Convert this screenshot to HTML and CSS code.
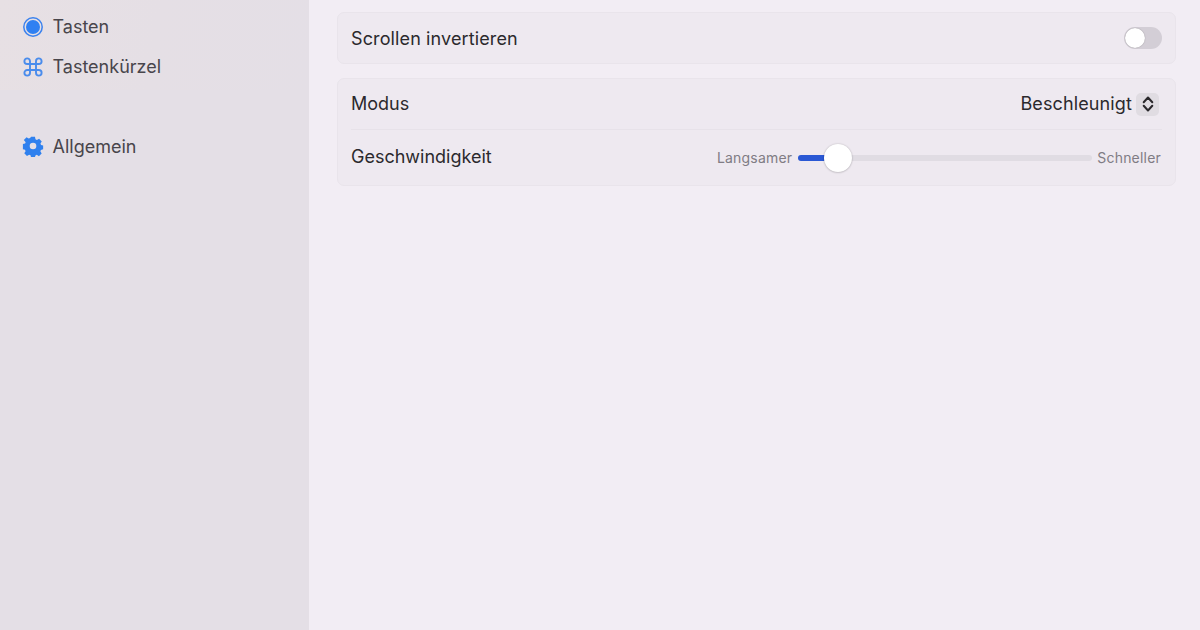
FILE: index.html
```html
<!DOCTYPE html>
<html lang="de">
<head>
<meta charset="utf-8">
<title>Einstellungen</title>
<link rel="stylesheet" href="styles.css">
</head>
<body>
<div class="app">
  <aside class="sidebar">
    <div class="nav-item">
      <svg class="icon" viewBox="0 0 22 22"><circle cx="11" cy="11" r="9.200" fill="none" stroke="#3b82ee" stroke-width="1.500"/><circle cx="11" cy="11" r="7" fill="#2f80f2"/></svg>
      <span class="label">Tasten</span>
    </div>
    <div class="nav-item">
      <svg class="icon" viewBox="0 0 22 22"><path d="M8 8h6v6H8z M8 8V5.200a2.800 2.800 0 1 0-2.800 2.800H8 M14 8h2.800A2.800 2.800 0 1 0 14 5.200V8 M8 14H5.200A2.800 2.800 0 1 0 8 16.800V14 M14 14v2.800a2.800 2.800 0 1 0 2.800-2.800H14" fill="none" stroke="#4a8cec" stroke-width="1.900"/></svg>
      <span class="label">Tastenkürzel</span>
    </div>
    <div class="nav-item nav-gap">
      <svg class="icon" viewBox="0 0 22 22"><path fill="#2f80ee" fill-rule="evenodd" transform="translate(.9 .9) scale(.92)" d="M8.900 1h4.200l.6 2.700 1.500.7 2.400-1.400 2.900 3-1.400 2.300.6 1.500 2.300.6v4.200l-2.400.6-.6 1.500 1.400 2.400-3 2.900-2.300-1.400-1.500.6-.6 2.300H8.900l-.6-2.400-1.500-.6-2.400 1.400-2.900-3 1.400-2.300-.6-1.500-2.300-.6V8.900l2.400-.6.6-1.500L1 4.400l3-2.900 2.300 1.400 1.500-.6zM11 7.400a3.600 3.600 0 1 0 0 7.200 3.600 3.600 0 0 0 0-7.200z"/></svg>
      <span>Allgemein</span>
    </div>
  </aside>
  <main class="content">
    <section class="panel">
      <div class="row row-toggle">
        <span class="wide">Scrollen invertieren</span>
        <div class="toggle"><div class="toggle-knob"></div></div>
      </div>
    </section>
    <section class="panel">
      <div class="row row-mode">
        <span class="label">Modus</span>
        <div class="select">
          <span class="label wide">Beschleunigt</span>
          <div class="stepper">
            <svg viewBox="0 0 12 18" class="stepper-icon"><path d="M1.700 7.200 6 2.500l4.300 4.700M1.700 10.800 6 15.500l4.300-4.700" fill="none" stroke="#2a282c" stroke-width="2" stroke-linecap="round" stroke-linejoin="round"/></svg>
          </div>
        </div>
      </div>
      <div class="row row-speed">
        <span class="label">Geschwindigkeit</span>
        <div class="slider-wrap">
          <span class="hint">Langsamer</span>
          <div class="slider">
            <div class="slider-fill"></div>
            <div class="slider-knob"></div>
          </div>
          <span class="hint">Schneller</span>
        </div>
      </div>
    </section>
  </main>
</div>
</body>
</html>
```
FILE: styles.css
```css
* { box-sizing: border-box; }
html, body { margin: 0; height: 100%; }
body {
  width: 1200px;
  height: 630px;
  overflow: hidden;
  font-family: Inter, "Liberation Sans", sans-serif;
  color: #2b292d;
  background: #f2edf4;
}
.app { display: flex; height: 630px; }
.sidebar {
  width: 309px;
  flex: none;
  padding-top: 7px;
  background: linear-gradient(100deg, #e7e0e4 0, #e5dfe5 50%, #e4dfe6 100%) 0 0 / 100% 90px no-repeat, #e4dfe6;
  color: #48454b;
}
.nav-item {
  display: flex;
  align-items: center;
  height: 40px;
  padding-left: 22px;
  gap: 8.500px;
  font-size: 18px;
}
.nav-gap { margin-top: 39px; }
.label { margin-bottom: 2px; }
.wide { letter-spacing: .12px; }
.icon { width: 22px; height: 22px; flex: none; }
.content {
  flex: 1;
  padding: 12px 24px 0 28px;
  display: flex;
  flex-direction: column;
  gap: 14px;
}
.panel {
  background: #eee9f0;
  border: 1px solid #e9e4eb;
  border-radius: 7px;
  padding: 0 13px;
  font-size: 18px;
}
.row { display: flex; align-items: center; justify-content: space-between; }
.row-toggle { height: 50px; }
.row-mode { height: 51px; border-bottom: 1px solid #e7e2e9; }
.row-speed { height: 55px; }
.toggle {
  width: 38px;
  height: 22px;
  border-radius: 11px;
  background: #d3ced6;
  padding: 1px;
}
.toggle-knob {
  width: 20px;
  height: 20px;
  border-radius: 50%;
  background: #fff;
  box-shadow: 0 0 1px rgba(0,0,0,.4);
}
.select { display: flex; align-items: center; gap: 4px; margin-right: 3px; }
.stepper {
  width: 23px;
  height: 23px;
  border-radius: 5px;
  background: #e0dce2;
  display: flex;
  align-items: center;
  justify-content: center;
}
.stepper-icon { width: 12px; height: 18px; }
.slider-wrap { display: flex; align-items: center; gap: 5px; margin-right: 1px; }
.hint { font-size: 14px; letter-spacing: .2px; color: #807c84; margin-bottom: 1px; }
.slider {
  position: relative;
  width: 294px;
  height: 6px;
  margin-left: 1px;
  border-radius: 3px;
  background: #e0dce3;
}
.slider-fill {
  width: 40px;
  height: 6px;
  border-radius: 3px;
  background: #2a58d4;
}
.slider-knob {
  position: absolute;
  left: 26px;
  top: -11px;
  width: 28px;
  height: 28px;
  border-radius: 50%;
  background: #fff;
  box-shadow: 0 0 2px rgba(0,0,0,.22), 0 1px 2px rgba(0,0,0,.1);
}
```
